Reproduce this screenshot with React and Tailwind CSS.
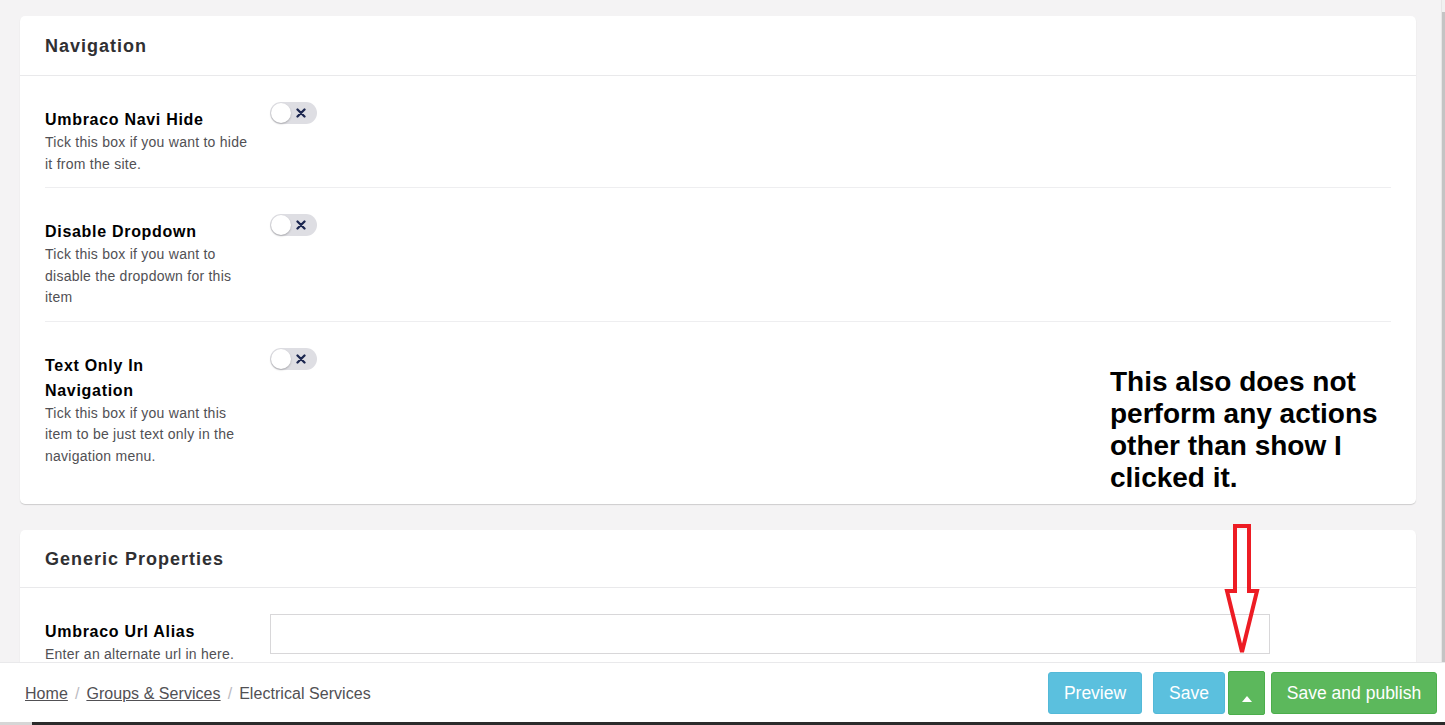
import React from 'react';

const font = { fontFamily: '"Liberation Sans", Arial, sans-serif' };

function Toggle() {
	return (
		<div className="relative w-[47px] h-[22px] rounded-full bg-[#dedee3] flex-shrink-0">
			<div className="absolute left-[1px] top-[1px] w-[20px] h-[20px] rounded-full bg-white shadow-[0_1px_2px_rgba(0,0,0,0.25)]" />
			<svg className="absolute left-[26px] top-[6px]" width="10" height="10" viewBox="0 0 10 10">
				<path d="M1.5 1.5 L8.5 8.5 M8.5 1.5 L1.5 8.5" stroke="#1b264f" strokeWidth="2.3" strokeLinecap="round" />
			</svg>
		</div>
	);
}

function PropertyRow({ title, description, last, children }) {
	return (
		<div className={`flex pt-[26px] ${last ? 'pb-[37px]' : 'pb-[12px] border-b border-[#eeeef0]'}`}>
			<div className="w-[225px] flex-shrink-0 pt-[5px]">
				<div className="max-w-[172px] text-[16px] leading-[25px] tracking-[0.7px] font-bold text-black">{title}</div>
				<div className="w-[205px] text-[14px] leading-[21.5px] tracking-[0.25px] text-[#515054]">{description}</div>
			</div>
			{children}
		</div>
	);
}

function Card({ title, headerClass, children }) {
	return (
		<div className="bg-white rounded-[5px] shadow-[0_1px_1px_rgba(0,0,0,0.16)]">
			<div className={`${headerClass} px-[25px] pt-[2px] flex items-center border-b border-[#e9e9eb]`}>
				<h2 className="text-[18px] tracking-[1px] font-bold text-[#303033]">{title}</h2>
			</div>
			<div className="px-[25px]">{children}</div>
		</div>
	);
}

export default function App() {
	return (
		<div className="h-[725px] w-[1445px] flex flex-col bg-[#f4f3f4] overflow-hidden" style={font}>
			<div className="flex-1 flex overflow-hidden relative">
				<div className="flex-1 pl-[20px] pr-[25px] pt-[16px] flex flex-col gap-[26px]">
					<Card title="Navigation" headerClass="h-[60px]">
						<PropertyRow title="Umbraco Navi Hide" description="Tick this box if you want to hide it from the site.">
							<Toggle />
						</PropertyRow>
						<PropertyRow title="Disable Dropdown" description="Tick this box if you want to disable the dropdown for this item">
							<Toggle />
						</PropertyRow>
						<PropertyRow title="Text Only In Navigation" description="Tick this box if you want this item to be just text only in the navigation menu." last>
							<Toggle />
						</PropertyRow>
					</Card>
					<Card title="Generic Properties" headerClass="h-[58px]">
						<PropertyRow title="Umbraco Url Alias" description="Enter an alternate url in here." last>
							<div className="w-[1000px] h-[40px] border border-[#d8d7d9] bg-white" />
						</PropertyRow>
					</Card>
				</div>
				<div className="w-[4px] border-l border-[#e6e6e6] bg-[#f1f1f1] pt-[12px] flex flex-col">
					<div className="flex-1 bg-[#c4c4c4]" />
				</div>

				{/* annotation */}
				<div className="absolute left-[1110px] top-[366px] text-[28px] leading-[32px] font-bold text-black">
					This also does not<br />perform any actions<br />other than show I<br />clicked it.
				</div>
				<svg className="absolute left-[1220px] top-[518px]" width="45" height="144" viewBox="0 0 45 144">
					<path d="M15 8 L29 8 L29 73 L37 73 L22 134 L7 73 L15 73 Z" fill="none" stroke="#ed1c24" strokeWidth="4" strokeLinejoin="miter" />
				</svg>
			</div>

			<div className="h-[60px] bg-white border-t border-[#e9e9eb] flex items-center justify-between pl-[25px] pr-[8px]">
				<div className="flex items-center mt-[2px] text-[16px] tracking-[0.05px] text-[#515054]">
					<span className="underline">Home</span>
					<span className="px-[7px] text-[#bbbabf]">/</span>
					<span className="underline">Groups &amp; Services</span>
					<span className="px-[7px] text-[#bbbabf]">/</span>
					<span>Electrical Services</span>
				</div>
				<div className="flex items-center mt-[1px]">
					<button className="w-[94px] h-[42px] rounded-[3px] bg-[#5bc0de] border border-[#53b9d8] text-white text-[17.5px]">Preview</button>
					<button className="ml-[11px] w-[72px] h-[42px] rounded-[3px] bg-[#5bc0de] border border-[#53b9d8] text-white text-[17.5px]">Save</button>
					<button className="ml-[3px] w-[37px] h-[44px] rounded-[2px] bg-[#5cb85c] border border-[#4cae4c] flex items-end justify-center pb-[12px]">
						<svg width="10" height="6" viewBox="0 0 10 6"><path d="M0 6 L5 0 L10 6 Z" fill="white" /></svg>
					</button>
					<button className="ml-[6px] w-[166px] h-[42px] rounded-[3px] bg-[#5cb85c] border border-[#4cae4c] text-white text-[17.5px]">Save and publish</button>
				</div>
			</div>
			<div className="h-[3px] flex">
				<div className="w-[32px] bg-[#d6d6d6]" />
				<div className="flex-1 bg-[#2b2b2b]" />
			</div>
		</div>
	);
}
